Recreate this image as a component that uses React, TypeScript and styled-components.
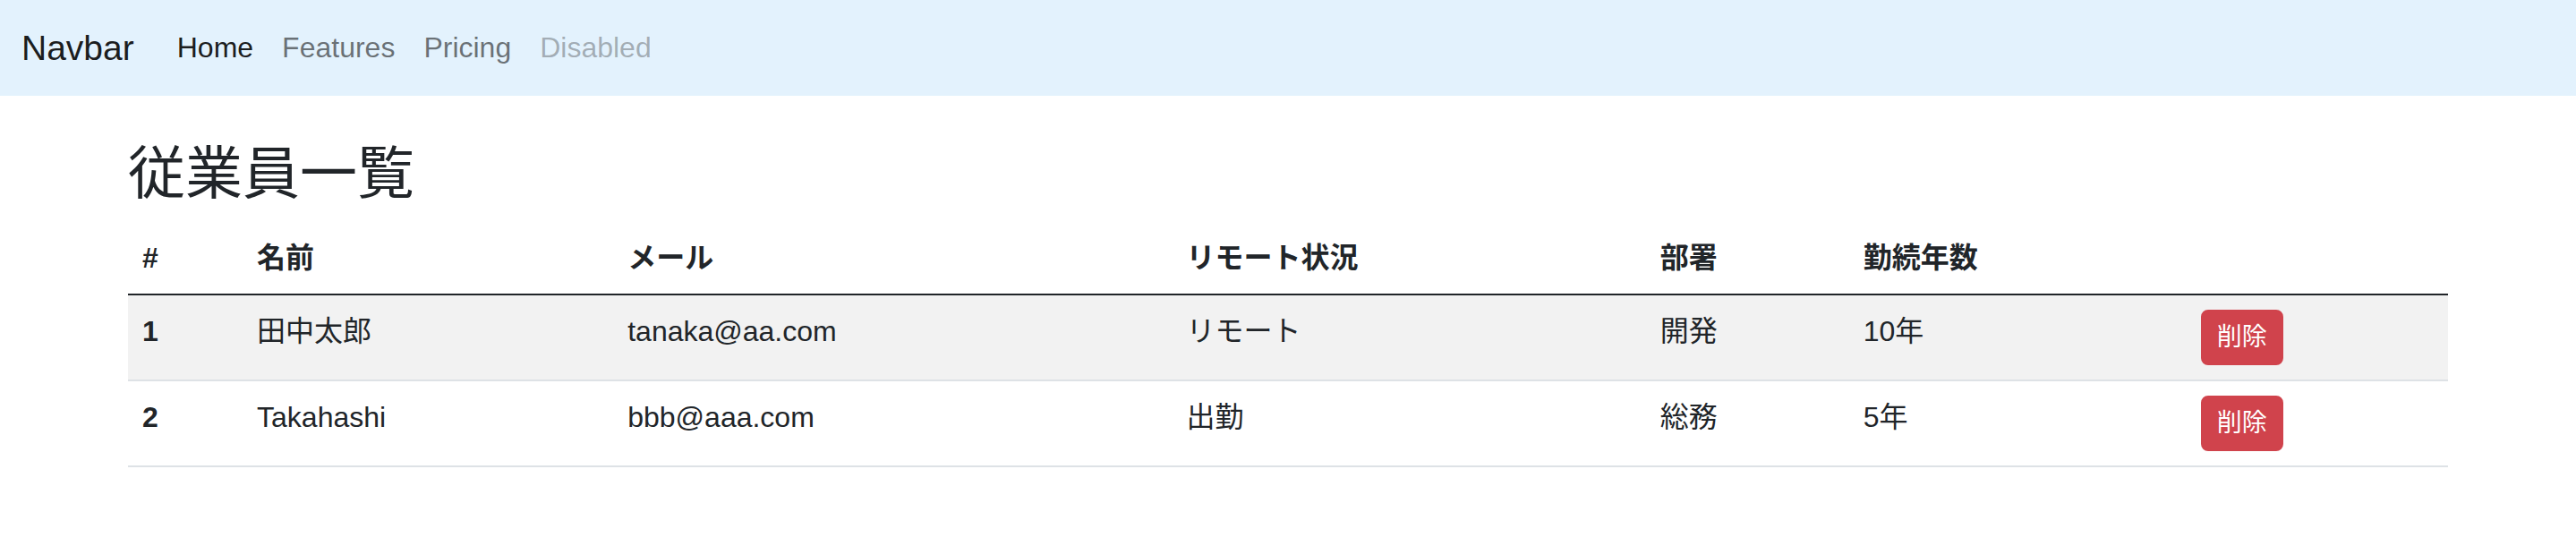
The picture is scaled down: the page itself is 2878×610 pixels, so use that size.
import React from 'react'
import styled, { createGlobalStyle } from 'styled-components'

const GlobalStyle = createGlobalStyle`
  body {
    margin: 0;
    background: #fff;
    color: #212529;
    font-family: "Liberation Sans", "Noto Sans CJK JP", sans-serif;
  }
`

const NavBar = styled.nav`
  display: flex;
  align-items: center;
  height: 107px;
  padding: 0 24px;
  background: #e3f2fd;
`

const Brand = styled.a`
  font-size: 39px;
  color: rgba(0, 0, 0, 0.9);
  text-decoration: none;
  margin-right: 32px;
`

const NavList = styled.div`
  display: flex;
  align-items: center;
`

const NavLink = styled.a<{ $state?: 'active' | 'disabled' }>`
  font-size: 32px;
  padding: 0 16px;
  text-decoration: none;
  color: ${(p) =>
    p.$state === 'active' ? 'rgba(0,0,0,0.9)' : p.$state === 'disabled' ? 'rgba(0,0,0,0.3)' : 'rgba(0,0,0,0.55)'};
`

const Container = styled.main`
  max-width: 2592px;
  margin: 0 auto;
  padding-top: 49px;
`

const Title = styled.h2`
  margin: 0 0 15px 0;
  font-size: 64px;
  line-height: 77px;
  font-weight: 400;
`

const Table = styled.table`
  width: 100%;
  border-collapse: collapse;
  table-layout: fixed;
  vertical-align: top;
  font-size: 32px;
  line-height: 48px;
`

const Th = styled.th`
  text-align: left;
  font-weight: 700;
  padding: 16px;
  border-bottom: 2px solid #212529;
`

const Row = styled.tr<{ $striped?: boolean }>`
  background: ${(p) => (p.$striped ? '#f2f2f2' : '#fff')};
  border-bottom: 2px solid #dee2e6;
`

const Td = styled.td<{ $bold?: boolean }>`
  padding: 16px;
  vertical-align: top;
  font-weight: ${(p) => (p.$bold ? 700 : 400)};
`

const DeleteButton = styled.button`
  font-family: inherit;
  font-size: 28px;
  line-height: 42px;
  padding: 8px 16px;
  color: #fff;
  background: #d0434c;
  border: 2px solid #d0434c;
  border-radius: 8px;
  cursor: pointer;
  display: block;
`

const widths = [128, 414, 624, 529, 227, 377, 292]

const employees = [
  { id: 1, name: '田中太郎', mail: 'tanaka@aa.com', remote: 'リモート', dept: '開発', years: '10年' },
  { id: 2, name: 'Takahashi', mail: 'bbb@aaa.com', remote: '出勤', dept: '総務', years: '5年' },
]

export default function App() {
  return (
    <>
      <GlobalStyle />
      <NavBar>
        <Brand href="#">Navbar</Brand>
        <NavList>
          <NavLink href="#" $state="active">Home</NavLink>
          <NavLink href="#">Features</NavLink>
          <NavLink href="#">Pricing</NavLink>
          <NavLink $state="disabled">Disabled</NavLink>
        </NavList>
      </NavBar>
      <Container>
        <Title>従業員一覧</Title>
        <Table>
          <colgroup>
            {widths.map((w, i) => (
              <col key={i} style={{ width: w }} />
            ))}
          </colgroup>
          <thead>
            <tr>
              <Th>#</Th>
              <Th>名前</Th>
              <Th>メール</Th>
              <Th>リモート状況</Th>
              <Th>部署</Th>
              <Th>勤続年数</Th>
              <Th></Th>
            </tr>
          </thead>
          <tbody>
            {employees.map((e, i) => (
              <Row key={e.id} $striped={i % 2 === 0}>
                <Td $bold>{e.id}</Td>
                <Td>{e.name}</Td>
                <Td>{e.mail}</Td>
                <Td>{e.remote}</Td>
                <Td>{e.dept}</Td>
                <Td>{e.years}</Td>
                <Td>
                  <DeleteButton>削除</DeleteButton>
                </Td>
              </Row>
            ))}
          </tbody>
        </Table>
      </Container>
    </>
  )
}
